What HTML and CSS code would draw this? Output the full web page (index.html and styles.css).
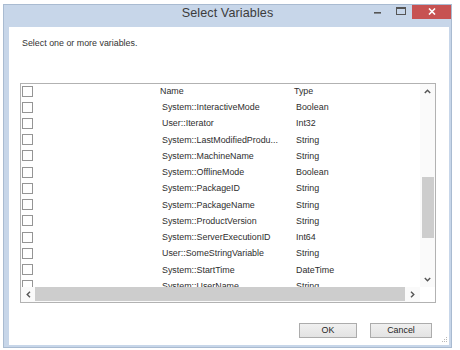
FILE: index.html
```html
<!DOCTYPE html>
<html>
<head>
<meta charset="utf-8">
<title>Select Variables</title>
<link rel="stylesheet" href="styles.css">
</head>
<body>
<div class="window">
  <div class="titlebar">
    <div></div>
    <div class="title">Select Variables</div>
    <div class="controls">
      <div class="ctl min"><svg width="7" height="2" viewBox="0 0 7 2"><rect x="0" y="0" width="7" height="1.6" fill="#555"/></svg></div>
      <div class="ctl max"><svg width="10" height="8" viewBox="0 0 10 8"><rect x="0.5" y="0.5" width="9" height="7" fill="none" stroke="#555" stroke-width="1"/><rect x="0" y="0" width="10" height="2" fill="#555"/></svg></div>
      <div class="ctl close"><svg width="8" height="7" viewBox="0 0 8 7"><path d="M1 0.5 L7 6.5 M7 0.5 L1 6.5" stroke="#fff" stroke-width="1.6" fill="none"/></svg></div>
    </div>
  </div>
  <div class="client">
    <p class="prompt">Select one or more variables.</p>
    <div class="list">
      <div class="view">
        <div class="row head"><span class="cell cbcell"><span class="cb"></span></span><span class="cell name">Name</span><span class="cell type">Type</span></div>
        <div class="row"><span class="cell cbcell"><span class="cb"></span></span><span class="cell name">System::InteractiveMode</span><span class="cell type">Boolean</span></div>
        <div class="row"><span class="cell cbcell"><span class="cb"></span></span><span class="cell name">User::Iterator</span><span class="cell type">Int32</span></div>
        <div class="row"><span class="cell cbcell"><span class="cb"></span></span><span class="cell name">System::LastModifiedProdu...</span><span class="cell type">String</span></div>
        <div class="row"><span class="cell cbcell"><span class="cb"></span></span><span class="cell name">System::MachineName</span><span class="cell type">String</span></div>
        <div class="row"><span class="cell cbcell"><span class="cb"></span></span><span class="cell name">System::OfflineMode</span><span class="cell type">Boolean</span></div>
        <div class="row"><span class="cell cbcell"><span class="cb"></span></span><span class="cell name">System::PackageID</span><span class="cell type">String</span></div>
        <div class="row"><span class="cell cbcell"><span class="cb"></span></span><span class="cell name">System::PackageName</span><span class="cell type">String</span></div>
        <div class="row"><span class="cell cbcell"><span class="cb"></span></span><span class="cell name">System::ProductVersion</span><span class="cell type">String</span></div>
        <div class="row"><span class="cell cbcell"><span class="cb"></span></span><span class="cell name">System::ServerExecutionID</span><span class="cell type">Int64</span></div>
        <div class="row"><span class="cell cbcell"><span class="cb"></span></span><span class="cell name">User::SomeStringVariable</span><span class="cell type">String</span></div>
        <div class="row"><span class="cell cbcell"><span class="cb"></span></span><span class="cell name">System::StartTime</span><span class="cell type">DateTime</span></div>
        <div class="row"><span class="cell cbcell"><span class="cb"></span></span><span class="cell name">System::UserName</span><span class="cell type">String</span></div>
      </div>
      <div class="vscroll">
        <div class="arrow"><svg width="7" height="5" viewBox="0 0 7 5"><path d="M0.8 4 L3.5 1.2 L6.2 4" stroke="#555" stroke-width="1.4" fill="none"/></svg></div>
        <div class="track"><div class="vthumb"></div></div>
        <div class="arrow"><svg width="7" height="5" viewBox="0 0 7 5"><path d="M0.8 1 L3.5 3.8 L6.2 1" stroke="#555" stroke-width="1.4" fill="none"/></svg></div>
      </div>
      <div class="hscroll">
        <div class="harrow left"><svg width="5" height="7" viewBox="0 0 5 7"><path d="M4 0.8 L1.2 3.5 L4 6.2" stroke="#555" stroke-width="1.4" fill="none"/></svg></div>
        <div class="hthumb"></div>
        <div class="harrow right"><svg width="5" height="7" viewBox="0 0 5 7"><path d="M1 0.8 L3.8 3.5 L1 6.2" stroke="#555" stroke-width="1.4" fill="none"/></svg></div>
      </div>
      <div class="corner"></div>
    </div>
    <div class="footer">
      <button class="btn ok">OK</button>
      <button class="btn cancel">Cancel</button>
    </div>
    <svg class="grip" width="7" height="7" viewBox="0 0 7 7"><g fill="#b8b8b8"><rect x="5" y="0" width="1" height="1"/><rect x="3" y="2" width="1" height="1"/><rect x="5" y="2" width="1" height="1"/><rect x="1" y="4" width="1" height="1"/><rect x="3" y="4" width="1" height="1"/><rect x="5" y="4" width="1" height="1"/></g></svg>
  </div>
</div>
</body>
</html>
```

FILE: styles.css
```css
html, body {
  margin: 0;
  padding: 0;
  background: #ffffff;
}

body {
  font-family: "Liberation Sans", Arial, sans-serif;
  color: #333333;
}

.window {
  margin: 4px 0 0 3px;
  width: 449px;
  height: 344px;
  box-sizing: border-box;
  background: #c7d6e9;
  border: 1px solid #a9bbd1;
  display: flex;
  flex-direction: column;
}

.titlebar {
  height: 22px;
  display: grid;
  grid-template-columns: 1fr auto 1fr;
  flex: none;
}

.title {
  font-size: 12.6px;
  line-height: 17px;
  color: #3c3c3c;
  padding-top: 0;
  letter-spacing: 0.1px;
}

.controls {
  justify-self: end;
  align-self: start;
  display: flex;
}

.ctl {
  width: 23px;
  height: 14px;
  display: flex;
  justify-content: center;
  align-items: flex-start;
}

.ctl svg {
  display: block;
}

.ctl.min {
  padding-top: 7px;
  box-sizing: border-box;
}

.ctl.max {
  padding-top: 2px;
  box-sizing: border-box;
}

.ctl.close {
  width: 39px;
  background: #c75252;
  padding-top: 3px;
  box-sizing: border-box;
}

.client {
  position: relative;
  flex: 1;
  margin: 0 2px 2px 5px;
  background: #ffffff;
  padding: 10px 13px 7px 11px;
  display: flex;
  flex-direction: column;
  box-sizing: border-box;
}

.prompt {
  margin: 0 0 0 2px;
  font-size: 8.9px;
  line-height: 12px;
  color: #333333;
}

.list {
  margin-top: 34px;
  height: 220px;
  box-sizing: border-box;
  border: 1px solid #b2b2b2;
  display: grid;
  grid-template-columns: 1fr 15px;
  grid-template-rows: 1fr 15px;
  flex: none;
}

.view {
  overflow: hidden;
  font-size: 8.9px;
  color: #2e2e2e;
}

.row {
  display: grid;
  grid-template-columns: 134px 134px 1fr;
  height: 16.25px;
  line-height: 16.25px;
  white-space: nowrap;
}

.row.head {
  height: 15px;
  line-height: 15px;
}

.cell {
  overflow: hidden;
}

.cbcell {
  display: flex;
  align-items: center;
}

.cb {
  display: block;
  width: 11px;
  height: 11px;
  box-sizing: border-box;
  border: 1px solid #959595;
  background: #ffffff;
  margin-left: 1px;
}

.name, .type {
  padding-left: 7px;
}

.head .name, .head .type {
  padding-left: 5px;
}

.vscroll {
  display: flex;
  flex-direction: column;
  background: #fafafa;
}

.arrow {
  height: 15px;
  display: flex;
  align-items: center;
  justify-content: center;
  flex: none;
}

.arrow svg, .harrow svg {
  display: block;
}

.track {
  flex: 1;
}

.vthumb {
  margin: 78px 1px 0 2px;
  height: 61px;
  background: #cdcdcd;
}

.hscroll {
  display: flex;
  background: #fafafa;
}

.harrow {
  display: flex;
  align-items: center;
  justify-content: center;
  flex: none;
}

.harrow.left {
  width: 14px;
}

.harrow.right {
  width: 15px;
}

.hthumb {
  flex: 1;
  height: 14px;
  background: #cdcdcd;
}

.corner {
  background: #ffffff;
}

.footer {
  margin-top: 20px;
  margin-right: 4px;
  display: flex;
  justify-content: flex-end;
  gap: 13px;
}

.btn {
  height: 15px;
  box-sizing: border-box;
  padding: 0;
  border: 1px solid #acacac;
  background: linear-gradient(#f0f0f0, #e3e3e3);
  font-family: "Liberation Sans", Arial, sans-serif;
  font-size: 8.9px;
  line-height: 13px;
  color: #262626;
}

.btn.ok {
  width: 58px;
}

.btn.cancel {
  width: 62px;
}

.grip {
  position: absolute;
  right: 1px;
  bottom: 1px;
}
```
